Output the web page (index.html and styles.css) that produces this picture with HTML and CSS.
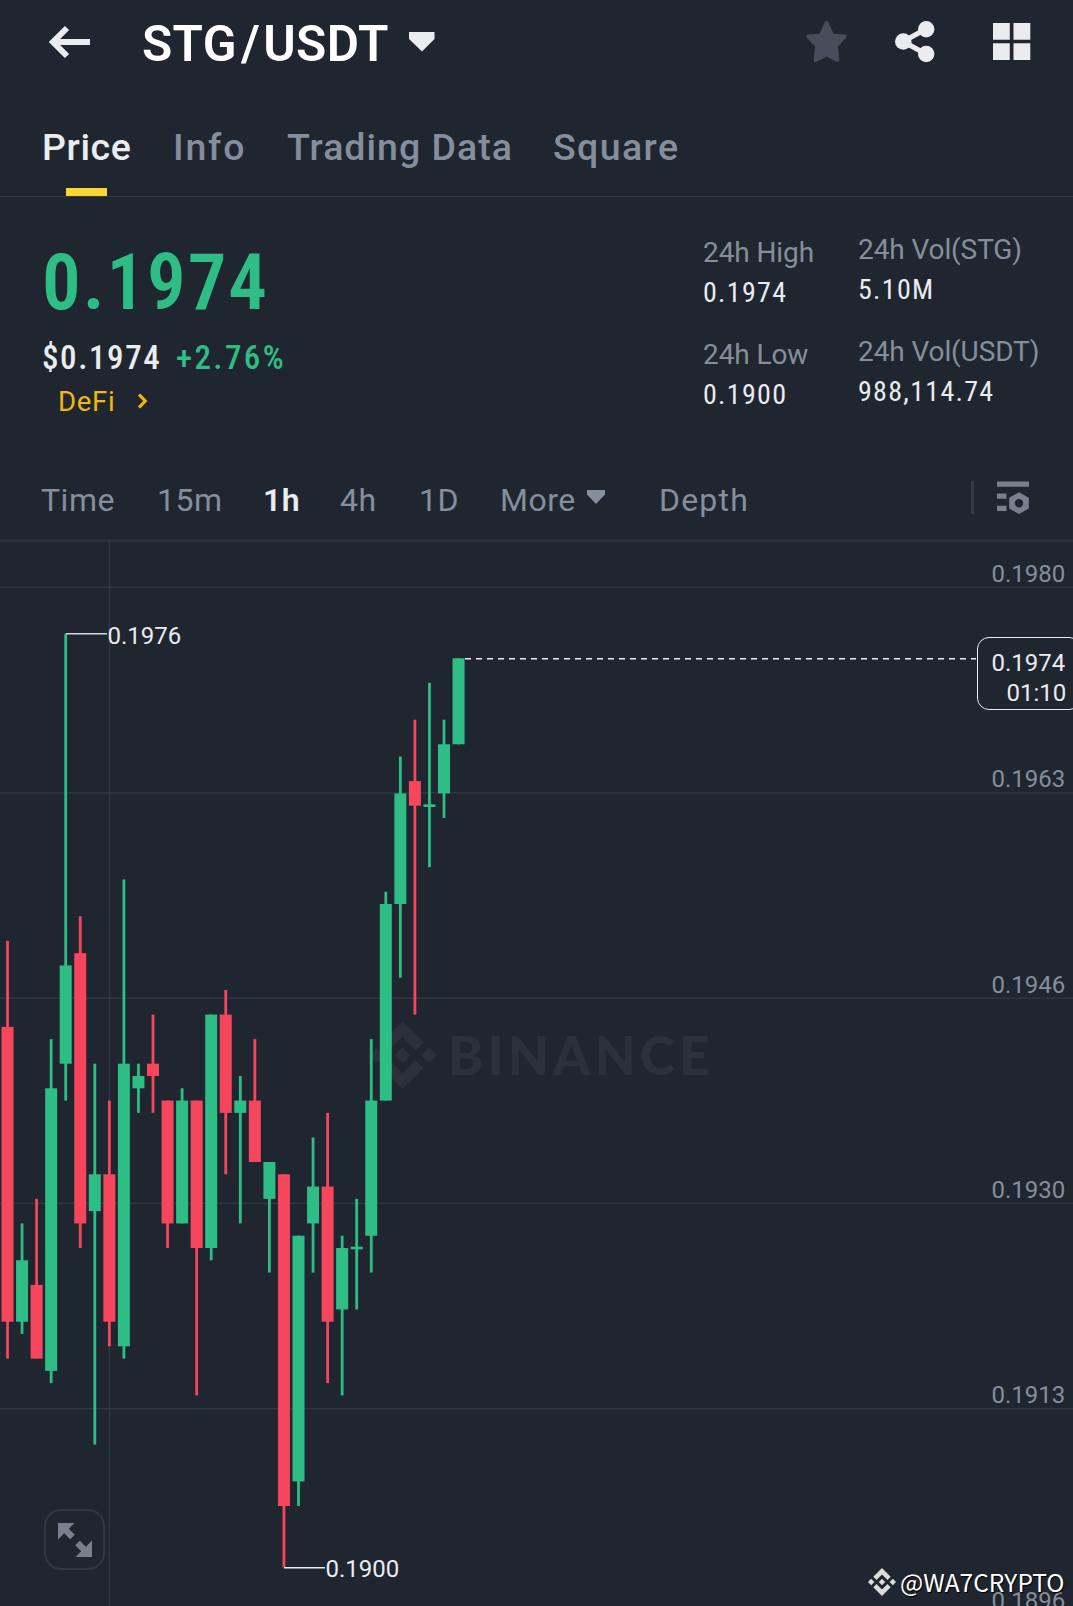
FILE: index.html
```html
<!DOCTYPE html>
<html lang="en">
<head>
    <meta charset="UTF-8">
    <title>STG/USDT</title>
    <link rel="stylesheet" href="styles.css">
</head>
<body>
<div class="page">
    <div class="header">
        <svg class="back" width="42" height="34" viewBox="0 0 42 34">
            <path d="M18 3L4 17l14 14M4 17h37" fill="none" stroke="#eaecef" stroke-width="6"/>
        </svg>
        <h1 class="pair">STG<i>/</i>USDT</h1>
        <svg class="pairCaret" width="26" height="20" viewBox="0 0 26 20">
            <path d="M0 0h25.5v7L13 19.5 0 7z" fill="#eaecef"/>
        </svg>
        <div class="headerIcons">
            <svg width="42" height="42" viewBox="0 0 42 42">
                <path d="M20.500 2l5.600 12.400 12.400 1.100-8.600 9.400 1.400 14.100L20.500 33.500 9.700 39l1.400-14.100-8.600-9.400 12.400-1.100z" fill="#474d5a" stroke="#474d5a" stroke-width="4" stroke-linejoin="round"/>
            </svg>
            <svg width="40" height="42" viewBox="0 0 40 42">
                <path d="M31 8L8 20.500 31 33" fill="none" stroke="#eaecef" stroke-width="5"/>
                <circle cx="8.300" cy="20.500" r="8.300" fill="#eaecef"/>
                <circle cx="31.200" cy="8.200" r="8.200" fill="#eaecef"/>
                <circle cx="31.200" cy="33" r="8.200" fill="#eaecef"/>
            </svg>
            <svg width="38" height="38" viewBox="0 0 38 38">
                <path d="M0 0h16.800v16.800H0zM20.500 0h16.800v16.800H20.500zM0 20.300h16.800v16.800H0zM20.500 20.300h16.800v16.800H20.500z" fill="#eaecef"/>
            </svg>
        </div>
    </div>
    <div class="tabs">
        <div class="tab tabPrice active">Price</div>
        <div class="tab tabInfo">Info</div>
        <div class="tab tabData">Trading Data</div>
        <div class="tab tabSquare">Square</div>
    </div>
    <div class="summary">
        <div class="quote">
            <div class="last">0.1974</div>
            <div class="change">
                <span class="fiat">$0.1974</span>
                <span class="percent">+2.76%</span>
            </div>
            <div class="tag">
                <span>DeFi</span>
                <svg width="11" height="16" viewBox="0 0 11 16">
                    <path d="M2 1.500L8.200 8 2 14.500" fill="none" stroke="#f0b90b" stroke-width="3.200"/>
                </svg>
            </div>
        </div>
        <div class="stats">
            <div class="stat"><p>24h High</p><b>0.1974</b></div>
            <div class="stat"><p>24h Low</p><b>0.1900</b></div>
        </div>
        <div class="stats statsVol">
            <div class="stat"><p>24h Vol(STG)</p><b>5.10M</b></div>
            <div class="stat"><p>24h Vol(USDT)</p><b>988,114.74</b></div>
        </div>
    </div>
    <div class="toolbar">
        <span class="period pTime">Time</span>
        <span class="period p15m">15m</span>
        <span class="period p1h active">1h</span>
        <span class="period p4h">4h</span>
        <span class="period p1d">1D</span>
        <span class="period pMore">More</span>
        <svg class="moreCaret" width="18" height="14" viewBox="0 0 18 14">
            <path d="M0 0h18v4.500L9 14 0 4.500z" fill="#848e9c"/>
        </svg>
        <span class="period pDepth">Depth</span>
        <div class="settings">
            <svg width="32" height="33" viewBox="0 0 32 33">
                <g fill="#787f8d">
                    <path d="M0 .500h32v5.200H0zM0 12.500h9.500v5.200H0zM0 24.800h9.500V30H0z"/>
                    <path fill-rule="evenodd" d="M22 11.300l9.800 5.500v10.700L22 33l-9.800-5.500V16.800zM22 18a4.200 4.200 0 1 0 0 8.400 4.200 4.200 0 0 0 0-8.400z"/>
                </g>
            </svg>
        </div>
    </div>
    <div class="chart">
        <svg id="kline" width="1073" height="1064" viewBox="0 542 1073 1064"></svg>
        <div class="priceTag">
            <span>0.1974</span>
            <span class="countdown">01:10</span>
        </div>
        <div class="expand">
            <svg width="34" height="34" viewBox="0 0 34 34">
                <path d="M0 0h16.500l-5.700 5.700 6 6-4.600 4.600-6-6L0 16.500zM34 34H17.500l5.700-5.700-6-6 4.600-4.600 6 6L34 17.500z" fill="#787f8d"/>
            </svg>
        </div>
        <div class="author">
            <svg width="28" height="28" viewBox="0 0 125.600 124.600">
                <path d="M38.170 53.200L62.760 28.620l24.600 24.600 14.300-14.300L62.760 0 23.870 38.900zM0 62.310l14.300-14.300 14.300 14.300-14.300 14.300zM38.170 71.410L62.760 96l24.600-24.600 14.300 14.290-38.900 38.910-38.910-38.880zM97 62.310l14.300-14.300 14.300 14.300-14.300 14.300zM77.260 62.300L62.750 47.780 48.240 62.310 62.750 76.800z" fill="#dcdcdc"/>
            </svg>
            <span>@WA7CRYPTO</span>
        </div>
    </div>
</div>
<script type="text/javascript">
    // open, close, high, low  (x 0.0001)
    var candles = [
        [1944,1920,1951,1917],[1920,1925,1928,1919],[1923,1917,1930,1917],[1916,1939,1943,1915],
        [1941,1949,1976,1938],[1950,1928,1953,1926],[1929,1932,1941,1910],[1932,1920,1938,1918],
        [1918,1941,1956,1917],[1939,1940,1941,1937],[1941,1940,1945,1937],[1938,1928,1938,1926],
        [1928,1938,1939,1928],[1938,1926,1938,1914],[1926,1945,1945,1925],[1945,1937,1947,1932],
        [1937,1938,1940,1928],[1938,1933,1943,1933],[1930,1933,1933,1924],[1932,1905,1932,1900],
        [1907,1927,1927,1905],[1928,1931,1935,1924],[1931,1920,1937,1915],[1921,1926,1927,1914],
        [1926,1926,1930,1921],[1927,1938,1943,1924],[1938,1954,1955,1938],[1954,1963,1966,1948],
        [1964,1962,1969,1945],[1962,1962,1972,1957],[1963,1967,1969,1961],[1967,1974,1974,1967]
    ];
    var up="#2ebd85",down="#f6465d";
    var grid=[[586.6,"0.1980"],[792.2,"0.1963"],[997.5,"0.1946"],[1202.7,"0.1930"],[1408,"0.1913"],[1613.5,"0.1896"]];
    function y(price) {
        return 633.7+(1976-price)*12.286;
    }
    function rect(x,top,w,h,color) {
        return '<rect x="'+x.toFixed(2)+'" y="'+top.toFixed(2)+'" width="'+w+'" height="'+h.toFixed(2)+'" fill="'+color+'"/>';
    }
    function label(x,top,text,cls) {
        return '<text class="'+cls+'" x="'+x+'" y="'+top+'">'+text+'</text>';
    }
    var html="";
    grid.forEach(function (g) {
        html+=rect(0,g[0],1073,1.4,"#2f3742");
    });
    html+=rect(108.7,542,1.3,1064,"#2f3742");
    // watermark
    html+='<g fill="#2b303b"><path transform="translate(368.500 1021.500) scale(.542)" d="M38.170 53.200L62.760 28.620l24.600 24.600 14.300-14.300L62.760 0 23.870 38.900zM0 62.310l14.300-14.300 14.300 14.300-14.300 14.300zM38.170 71.410L62.760 96l24.600-24.600 14.300 14.290-38.900 38.910-38.910-38.880zM97 62.310l14.300-14.300 14.300 14.300-14.300 14.300zM77.260 62.300L62.750 47.780 48.240 62.310 62.750 76.800z"/></g>';
    html+=label(448,1074.5,"BINANCE","watermark");
    candles.forEach(function (c,i) {
        var x=7.5+i*14.55;
        var color=c[1]>=c[0]?up:down;
        var top=y(Math.max(c[0],c[1])),h=Math.abs(c[0]-c[1])*12.286;
        html+=rect(x-1.4,y(c[2]),2.8,y(c[3])-y(c[2]),color);
        html+=h?rect(x-6,top,12,h,color):rect(x-6,top-1.3,12,2.6,color);
    });
    html+=rect(66,633,41,1.5,"#d5d7dc")+label(107.5,644,"0.1976","mark");
    html+=rect(284,1567,41,1.5,"#eaecef")+label(325.5,1577,"0.1900","mark");
    html+='<path d="M465 658.700H976" stroke="#eaecef" stroke-width="1.500" stroke-dasharray="6 5"/>';
    grid.forEach(function (g) {
        html+=label(991.5,g[0]-5,g[1],"axis");
    });
    document.getElementById("kline").innerHTML=html;
</script>
</body>
</html>
```
FILE: styles.css
```css
body,html,h1,p{
    padding: 0;
    margin: 0;
}
body{
    background: #202630;
    color: #eaecef;
    font-family: Roboto, "Liberation Sans", sans-serif;
}
.page{
    width: 1073px;
    height: 1606px;
    overflow: hidden;
}
.page svg{
    display: block;
    flex: none;
}
.header{
    display: flex;
    align-items: center;
    height: 84px;
    padding: 0 42px 0 49px;
}
.pair{
    font-size: 49.5px;
    font-weight: 600;
    line-height: 84px;
    letter-spacing: .400px;
    color: #fff;
    margin: 3px 0 0 51px;
    width: 266.500px;
    white-space: nowrap;
}
.pair i{
    font-style: normal;
    margin: 0 3px 0 4px;
}
.headerIcons{
    display: flex;
    align-items: center;
    margin-left: auto;
}
.headerIcons svg:nth-child(2){
    margin: 0 58px 0 47px;
}
.tabs{
    display: flex;
    height: 112px;
    padding-left: 42px;
    border-bottom: 1px solid #2f3a45;
}
.tab{
    font-size: 37.500px;
    font-weight: 500;
    line-height: 126px;
    color: #848e9c;
    white-space: nowrap;
}
.tab.active{
    color: #eaecef;
    background: linear-gradient(#fcd535,#fcd535) 24px 104px/41px 8px no-repeat;
}
.tabPrice{
    width: 131px;
    letter-spacing: .600px;
}
.tabInfo{
    width: 114px;
    letter-spacing: 1.800px;
}
.tabData{
    width: 266px;
    letter-spacing: 1px;
}
.tabSquare{
    letter-spacing: 1.400px;
}
.summary{
    display: flex;
    height: 263px;
}
.quote{
    width: 662px;
    padding: 46px 0 0 42px;
    box-sizing: border-box;
    margin-right: 41px;
}
.last{
    font-size: 77px;
    font-weight: 600;
    line-height: 80px;
    color: #2ebd85;
    font-stretch: 83%;
    letter-spacing: 1.900px;
}
.change{
    display: flex;
    font-size: 33px;
    font-weight: 500;
    font-stretch: 86%;
    letter-spacing: 1.600px;
    line-height: 40px;
    margin-top: 15px;
}
.fiat{
    width: 134px;
}
.percent{
    color: #2ebd85;
    letter-spacing: 2.400px;
}
.tag{
    display: flex;
    align-items: center;
    font-size: 27.500px;
    letter-spacing: .700px;
    line-height: 30px;
    margin: 9px 0 0 16px;
    color: #f0b90b;
}
.tag span{
    width: 79px;
}
.tag svg{
    margin-bottom: 2px;
}
.stats{
    width: 155px;
    padding-top: 36px;
}
.statsVol{
    width: auto;
    padding-top: 33px;
}
.stat{
    font-size: 28px;
    letter-spacing: -.100px;
    line-height: 40px;
    margin-bottom: 22px;
    white-space: nowrap;
}
.stat p{
    color: #848e9c;
}
.stat b{
    display: block;
    font-weight: 450;
    font-stretch: 87%;
    letter-spacing: 1.300px;
}
.toolbar{
    display: flex;
    align-items: center;
    height: 79px;
    padding-left: 41px;
    border-bottom: 3px solid #2b303b;
}
.period{
    font-size: 32px;
    letter-spacing: .500px;
    line-height: 79px;
    padding-top: 1px;
    color: #848e9c;
    white-space: nowrap;
}
.period.active{
    color: #eaecef;
    font-weight: 600;
}
.pTime{
    width: 116px;
}
.p15m{
    width: 106px;
}
.p1h{
    width: 77px;
}
.p4h{
    width: 79px;
}
.p1d{
    width: 81px;
}
.pMore{
    width: 87px;
}
.pDepth{
    letter-spacing: 1.200px;
}
.moreCaret{
    margin: 0 54px 5px 0;
}
.settings{
    margin: 0 44px 4px auto;
    padding-left: 23px;
    border-left: 3px solid #323844;
}
.chart{
    position: relative;
    height: 1064px;
}
.axis,.mark{
    font-size: 24px;
    fill: #848e9c;
}
.mark{
    fill: #eaecef;
}
.watermark{
    font-family: Lato, sans-serif;
    font-size: 53px;
    font-weight: 900;
    letter-spacing: 4.300px;
    fill: #2b303b;
}
.priceTag{
    position: absolute;
    left: 977px;
    top: 95px;
    width: 104px;
    height: 73px;
    box-sizing: border-box;
    border: 1.500px solid #eaecef;
    border-radius: 12px;
    background: #202630;
    padding: 10px 0 0 13.500px;
    font-size: 24px;
    line-height: 30px;
}
.priceTag span{
    display: block;
}
.priceTag .countdown{
    padding-left: 15px;
}
.expand{
    position: absolute;
    left: 44px;
    top: 967px;
    width: 61px;
    height: 61px;
    box-sizing: border-box;
    border: 2px solid #2f3742;
    border-radius: 17px;
    background: #202630;
    display: flex;
    align-items: center;
    justify-content: center;
}
.author{
    position: absolute;
    left: 868px;
    top: 1024px;
    display: flex;
    align-items: center;
    gap: 4px;
    font-family: "Noto Sans CJK SC", sans-serif;
    font-size: 24.500px;
    line-height: 32px;
    color: #fff;
    text-shadow: 1px 1px 1px #000;
}
```
